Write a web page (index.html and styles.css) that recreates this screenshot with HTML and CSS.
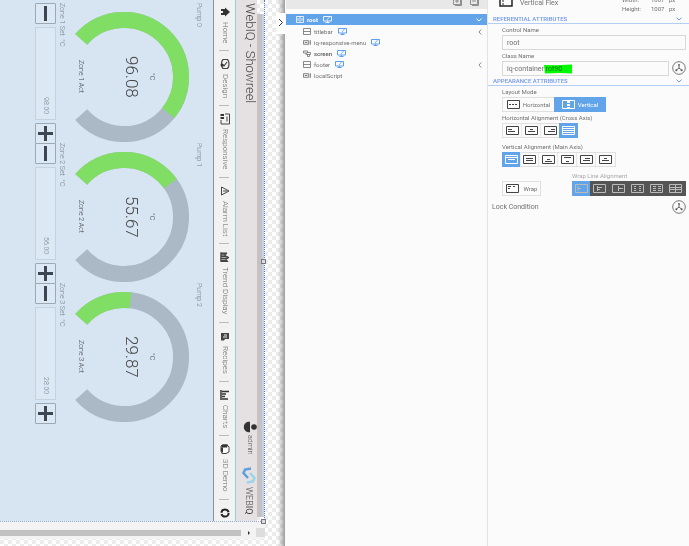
FILE: index.html
```html
<!DOCTYPE html>
<html lang="en">
<head>
    <meta charset="UTF-8">
    <meta name="viewport" content="width=device-width, initial-scale=1.0">
    <title>WebIQ Designer</title>
    <link rel="stylesheet" href="styles.css">
</head>
<body>
    <!-- shared icons -->
    <svg class="sprite" aria-hidden="true">
        <symbol id="i-monitor" viewBox="0 0 9 7"><path d="M.5.5h8v4.500h-8zM2.500 6.500h4" fill="none" stroke="currentColor" stroke-width=".9"/><path d="M4 4l2.500-3M4.500 5v1.500" stroke="currentColor" stroke-width=".7"/></symbol>
        <symbol id="i-rows" viewBox="0 0 8 7"><path d="M.5.5h7v6h-7zM.5 3.5h7" fill="none" stroke="currentColor" stroke-width=".8"/></symbol>
        <symbol id="i-script" viewBox="0 0 9 7"><path d="M.5 1.5h6v4h-6zM8.3 1v5M2 3.5h3" fill="none" stroke="currentColor"/></symbol>
        <symbol id="i-down" viewBox="0 0 6 4"><path d="M.5.7L3 3 5.500.7" fill="none" stroke="currentColor"/></symbol>
        <symbol id="i-left" viewBox="0 0 4 6"><path d="M3.200.5L1 3l2.200 2.500" fill="none" stroke="currentColor" stroke-width=".8"/></symbol>
        <symbol id="i-bind" viewBox="0 0 14 14"><circle cx="7" cy="7" r="6.300" fill="none" stroke="currentColor" stroke-width=".8"/><path d="M7 4v3L4.500 9M7 7l2.500 2" fill="none" stroke="currentColor" stroke-width=".9"/><circle cx="7" cy="3.800" r=".9" fill="currentColor"/><circle cx="4.300" cy="9.200" r="1" fill="currentColor"/><circle cx="9.700" cy="9.200" r="1" fill="currentColor"/></symbol>
    </svg>

    <main class="designer">
        <section class="canvas">
            <div class="viewport">
                <div class="app">
                    <header class="titlebar">
                        <h1>WebIQ - Showreel</h1>
                        <div class="user">
                            <svg width="14" height="12" viewBox="0 0 14 12"><circle cx="11" cy="6" r="2.800" fill="#333"/><path d="M7 .8v10.400H5C-.6 10-.6 2 5 .8z" fill="#333"/></svg>
                            admin
                        </div>
                        <div class="brand">
                            <svg width="16" height="19" viewBox="0 0 16 19"><path d="M10 2.500L4 3.500 2.500 7 7 12" fill="none" stroke="#5c9fdb" stroke-width="2.500"/><path d="M6 16.500l6-1 1.500-3.500L9 7" fill="none" stroke="#9bd3ea" stroke-width="2.500"/></svg>
                            <span>WEB<b>IQ</b></span>
                        </div>
                    </header>
                    <nav class="menu">
                        <a href="#"><svg viewBox="0 0 12 12"><path d="M11 6L6 1.500V3H2v2h2v2H2v2h4v1.500z" fill="#333"/></svg>Home</a>
                        <a href="#"><svg viewBox="0 0 12 12"><path d="M4 1.500h4.500c2 2 2 7 0 9H4c-2-2-2-7 0-9zM8 4L5 8 3.500 6" fill="none" stroke="#444" stroke-width="1.200"/><circle cx="3" cy="7" r="1.500" fill="#333"/></svg>Design</a>
                        <a href="#"><svg viewBox="0 0 12 12"><path d="M6 1h4.500v10H2V7M8 3.500v5" fill="none" stroke="#444"/><path d="M1.500 1h3.500v2H1.500zM1.500 4h3.500v2H1.500z" fill="#333"/></svg>Responsive</a>
                        <a href="#"><svg viewBox="0 0 12 12"><path d="M10 6L2.500 2v8z" fill="none" stroke="#444"/><path d="M4 6h4" stroke="#444"/></svg>Alarm List</a>
                        <a href="#"><svg viewBox="0 0 12 12"><path d="M2 1v10M2 2h6L6 4.500l4 2L7 8.500l2 2H2z" fill="#444" stroke="#444"/><path d="M2.500 4h3M2.500 6.500h5M2.500 8.500h4" stroke="#eee" stroke-width=".6"/></svg>Trend Display</a>
                        <a href="#"><svg viewBox="0 0 12 12"><path d="M2 3h8v6H6l-1 1.500H2z" fill="#444"/><path d="M5 5h3M4 7h4" stroke="#eee"/></svg>Recipes</a>
                        <a href="#"><svg viewBox="0 0 12 12"><path d="M2 1v10M3 2.500h7M3 5h4M3 7.500h3M3 10h6" fill="none" stroke="#333" stroke-width="1.500"/></svg>Charts</a>
                        <a href="#"><svg viewBox="0 0 12 12"><path d="M3 2h5l2 2v5l-3 1.500H3L2 8V3.500z" fill="#fff" stroke="#444"/><path d="M2 3l2-1.500h5L8 4.500H3z" fill="#333"/><path d="M2 4.500h2v5.500L2 8z" fill="#333"/></svg>3D Demo</a>
                        <a href="#"><svg viewBox="0 0 12 12"><circle cx="6" cy="6" r="3.600" fill="none" stroke="#222" stroke-width="2" stroke-dasharray="10 1.300"/></svg>D</a>
                    </nav>
                    <div class="pumps">
                        <section class="pump">
                            <h2>Pump 0</h2>
                            <div class="gauge">
                                <svg viewBox="0 0 130 130"><path class="track" d="M22.200 27.400A57 57 0 1 1 22.200 102.600"/><path class="fill" pathLength="150" stroke-dasharray="96.080 150" d="M22.200 27.400A57 57 0 1 1 22.200 102.600"/></svg>
                                <div class="reading"><span class="unit">°C</span><span class="value">96.08</span><span class="name">Zone 1 Act</span></div>
                            </div>
                            <label for="set1">Zone 1 Set &nbsp;°C</label>
                            <div class="stepper"><button type="button" aria-label="Decrease" class="minus"></button><input id="set1" value="98.00"><button type="button" aria-label="Increase" class="plus"></button></div>
                        </section>
                        <section class="pump">
                            <h2>Pump 1</h2>
                            <div class="gauge">
                                <svg viewBox="0 0 130 130"><path class="track" d="M22.200 27.400A57 57 0 1 1 22.200 102.600"/><path class="fill" pathLength="150" stroke-dasharray="55.670 150" d="M22.200 27.400A57 57 0 1 1 22.200 102.600"/></svg>
                                <div class="reading"><span class="unit">°C</span><span class="value">55.67</span><span class="name">Zone 2 Act</span></div>
                            </div>
                            <label for="set2">Zone 2 Set &nbsp;°C</label>
                            <div class="stepper"><button type="button" aria-label="Decrease" class="minus"></button><input id="set2" value="56.00"><button type="button" aria-label="Increase" class="plus"></button></div>
                        </section>
                        <section class="pump">
                            <h2>Pump 2</h2>
                            <div class="gauge">
                                <svg viewBox="0 0 130 130"><path class="track" d="M22.200 27.400A57 57 0 1 1 22.200 102.600"/><path class="fill" pathLength="150" stroke-dasharray="29.870 150" d="M22.200 27.400A57 57 0 1 1 22.200 102.600"/></svg>
                                <div class="reading"><span class="unit">°C</span><span class="value">29.87</span><span class="name">Zone 3 Act</span></div>
                            </div>
                            <label for="set3">Zone 3 Set &nbsp;°C</label>
                            <div class="stepper"><button type="button" aria-label="Decrease" class="minus"></button><input id="set3" value="28.00"><button type="button" aria-label="Increase" class="plus"></button></div>
                        </section>
                    </div>
                </div>
                <div class="scroll-y"></div>
                <div class="handle handle-mid"></div>
                <div class="handle handle-end"></div>
            </div>
            <div class="scroll-x"><div class="thumb"></div><svg width="4" height="6" viewBox="0 0 4 6"><path d="M1 1l2 2-2 2z" fill="#333"/></svg><div class="corner"></div></div>
        </section>

        <aside class="tree">
            <button type="button" class="collapse" aria-label="Collapse panel"><svg width="6" height="9" viewBox="0 0 6 9"><path d="M1 1l3.500 3.500L1 8" fill="none" stroke="#333"/></svg></button>
            <div class="tree-tools">
                <button type="button" aria-label="Expand all"><svg width="9" height="9" viewBox="0 0 9 9"><path d="M.5.5h7v7h-7zM2 4h4M4 2v4M8.500 2v6.500H2" fill="none" stroke="#777" stroke-width=".8"/></svg></button>
                <button type="button" aria-label="Collapse all"><svg width="9" height="9" viewBox="0 0 9 9"><path d="M.5.5h7v7h-7zM2 4h4M8.500 2v6.500H2" fill="none" stroke="#777" stroke-width=".8"/></svg></button>
            </div>
            <ul>
                <li class="node root"><svg width="8" height="7" viewBox="0 0 8 7"><path d="M.5.5h7v6h-7zM4 .5v6M2 2v3M6 2v3" fill="none" stroke="currentColor" stroke-width=".8"/></svg><b>root</b><svg class="link" width="9" height="7"><use href="#i-monitor"/></svg><svg class="arrow" width="6" height="4"><use href="#i-down"/></svg></li>
                <li class="node"><svg width="8" height="7"><use href="#i-rows"/></svg>titlebar<svg class="link" width="9" height="7"><use href="#i-monitor"/></svg><svg class="arrow" width="4" height="6"><use href="#i-left"/></svg></li>
                <li class="node"><svg width="8" height="7"><use href="#i-script"/></svg>iq-responsive-menu<svg class="link" width="9" height="7"><use href="#i-monitor"/></svg></li>
                <li class="node"><svg width="8" height="7" viewBox="0 0 8 7"><path d="M.5 1h4v2h-4zM3 3v1.500h4.500v-2H5M4.500 4.500v2h2v-2" fill="none" stroke="currentColor" stroke-width=".8"/></svg><b>screen</b><svg class="link" width="9" height="7"><use href="#i-monitor"/></svg></li>
                <li class="node"><svg width="8" height="7"><use href="#i-rows"/></svg>footer<svg class="link" width="9" height="7"><use href="#i-monitor"/></svg><svg class="arrow" width="4" height="6"><use href="#i-left"/></svg></li>
                <li class="node"><svg width="8" height="7"><use href="#i-script"/></svg>localScript</li>
            </ul>
        </aside>

        <aside class="props">
            <div class="summary">
                <svg width="14" height="14" viewBox="0 0 14 14"><path d="M1 1h12v12H1z" fill="none" stroke="#222" stroke-width="1.500"/><path d="M4 1v12" stroke="#222" stroke-dasharray="2 1"/></svg>
                <span class="kind">Vertical Flex</span>
                <dl>
                    <dt>Width:</dt><dd>1007</dd><dd>px</dd>
                    <dt>Height:</dt><dd>1007</dd><dd>px</dd>
                </dl>
            </div>
            <h3>REFERENTIAL ATTRIBUTES<svg width="6" height="4"><use href="#i-down"/></svg></h3>
            <div class="group">
                <label for="cname">Control Name</label>
                <input id="cname" value="root">
                <label for="clsname">Class Name</label>
                <div class="row">
                    <div class="field"><input id="clsname" value="iq-container rot90"><svg class="marker" width="28" height="10" viewBox="0 0 28 10"><path d="M0 1l12 .3L28 .5v9l-12-.5L1 9.500z" fill="#0f0"/></svg></div>
                    <button type="button" class="bind" aria-label="Bind class"><svg width="14" height="14"><use href="#i-bind"/></svg></button>
                </div>
            </div>
            <h3>APPEARANCE ATTRIBUTES<svg width="6" height="4"><use href="#i-down"/></svg></h3>
            <div class="group appearance">
                <p>Layout Mode</p>
                <div class="segments wide">
                    <button type="button"><svg viewBox="0 0 13 9"><path d="M.5.5h12v8H.5z"/><path d="M2 4.500h9" stroke-dasharray="2 1"/></svg>Horizontal</button>
                    <button type="button" class="on"><svg viewBox="0 0 13 9"><path d="M.5.5h12v8H.5z"/><path d="M6.500 1v7" stroke-width="3" stroke-dasharray="2 1"/></svg>Vertical</button>
                </div>
                <p>Horizontal Alignment (Cross Axis)</p>
                <div class="segments">
                    <button type="button" aria-label="Start"><svg viewBox="0 0 13 9"><path d="M.5.5h12v8H.5zM2 3.500h4M2 5.500h7"/></svg></button>
                    <button type="button" aria-label="Center"><svg viewBox="0 0 13 9"><path d="M.5.5h12v8H.5zM5 3.500h3M3 5.500h7"/></svg></button>
                    <button type="button" aria-label="End"><svg viewBox="0 0 13 9"><path d="M.5.5h12v8H.5zM7 3.500h4M4 5.500h7"/></svg></button>
                    <button type="button" class="on" aria-label="Stretch"><svg viewBox="0 0 13 9"><path d="M.5.5h12v8H.5zM1 2.500h11M1 4.500h11M1 6.500h11"/></svg></button>
                </div>
                <p class="spaced">Vertical Alignment (Main Axis)</p>
                <div class="segments">
                    <button type="button" class="on" aria-label="Start"><svg viewBox="0 0 13 9"><path d="M.5.5h12v8H.5zM1 2.500h11M3 4.500h7"/></svg></button>
                    <button type="button" aria-label="Center"><svg viewBox="0 0 13 9"><path d="M.5.5h12v8H.5zM3 3.500h7M3 5.500h7"/></svg></button>
                    <button type="button" aria-label="End"><svg viewBox="0 0 13 9"><path d="M.5.5h12v8H.5zM5 4.500h3M3 6.500h7"/></svg></button>
                    <button type="button" aria-label="Space between"><svg viewBox="0 0 13 9"><path d="M.5.5h12v8H.5zM3 2.500h7M5 6.500h3"/></svg></button>
                    <button type="button" aria-label="Space around"><svg viewBox="0 0 13 9"><path d="M.5.5h12v8H.5zM5 3.500h5M3 5.500h7"/></svg></button>
                    <button type="button" aria-label="Space evenly"><svg viewBox="0 0 13 9"><path d="M.5.5h12v8H.5zM5 3.500h3M3 5.500h7"/></svg></button>
                </div>
                <div class="row wrap-row">
                    <div class="segments">
                        <button type="button" class="wrap"><svg viewBox="0 0 13 9"><path d="M.5.5h12v8H.5zM2 2.500h3M7 2.500h2M2 4.500h2"/></svg>Wrap</button>
                    </div>
                    <div class="wrap-lines">
                        <p>Wrap Line Alignment</p>
                        <div class="segments disabled">
                            <button type="button" class="on" disabled aria-label="Start"><svg viewBox="0 0 13 9"><path d="M.5.5h12v8H.5zM3 2v5M3 4.500h3"/></svg></button>
                            <button type="button" disabled aria-label="Center"><svg viewBox="0 0 13 9"><path d="M.5.5h12v8H.5zM4.500 2v5M5 3.500h4M5 5.500h2"/></svg></button>
                            <button type="button" disabled aria-label="End"><svg viewBox="0 0 13 9"><path d="M.5.5h12v8H.5zM6.500 2v5M7 4.500h4"/></svg></button>
                            <button type="button" disabled aria-label="Space between"><svg viewBox="0 0 13 9"><path d="M.5.5h12v8H.5zM3 2.500h2M3 4.500h2M3 6.500h2M8 2.500h2M8 4.500h2M8 6.500h2"/></svg></button>
                            <button type="button" disabled aria-label="Space around"><svg viewBox="0 0 13 9"><path d="M.5.5h12v8H.5zM3 2.500h3M3 4.500h3M3 6.500h3M8 2.500h3M8 4.500h3M8 6.500h3"/></svg></button>
                            <button type="button" disabled aria-label="Stretch"><svg viewBox="0 0 13 9"><path d="M.5.5h12v8H.5zM1 3.500h11M1 5.500h11M6.500 1v7"/></svg></button>
                        </div>
                    </div>
                </div>
            </div>
            <div class="lock">Lock Condition<button type="button" class="bind" aria-label="Bind lock"><svg width="14" height="14"><use href="#i-bind"/></svg></button></div>
        </aside>
    </main>
</body>
</html>
```
FILE: styles.css
```css
* {
    margin: 0;
    padding: 0;
    box-sizing: border-box;
}

body {
    font-family: Roboto, sans-serif;
    font-size: 6px;
    line-height: 8px;
    color: #707070;
    background: #fbfbfb;
}

button,
input {
    font: inherit;
    color: inherit;
    border: 0;
    background: none;
}

.sprite {
    position: absolute;
    width: 0;
    height: 0;
}

.designer {
    display: grid;
    grid-template-columns: 1fr 203px 201px;
    height: 100vh;
}

/* canvas with the rotated preview */
.canvas {
    display: flex;
    flex-direction: column;
    min-width: 0;
    padding: 0 20px 7px 0;
    background: linear-gradient(to left, rgba(120,120,120,0.7), rgba(150,150,150,0) 7px), repeating-conic-gradient(#ececec 0 25%, #fff 0 50%) 0 0 / 8px 8px;
    overflow: hidden;
}

.viewport {
    position: relative;
    display: flex;
    flex: 1;
    min-height: 0;
    border-right: 1px dotted #5a7fc0;
    border-bottom: 1px dotted #8fa9d0;
}

.app {
    writing-mode: vertical-rl;
    display: flex;
    flex-direction: column;
    flex: 1;
    min-width: 0;
    overflow: hidden;
    font-weight: 300;
}

.scroll-y {
    width: 7px;
    margin: 14px 0 4px;
    background: #c6c2c2;
    border-right: 2px solid #c3d3ea;
}

.handle {
    position: absolute;
    right: -2px;
    width: 5px;
    height: 5px;
    border: 1px solid #778;
    background: #ddd;
}

.handle-mid {
    top: calc(50% - 2px);
}

.handle-end {
    bottom: -3px;
}

.scroll-x {
    display: flex;
    align-items: center;
    justify-content: space-between;
    height: 17px;
    padding-top: 4px;
    background: #f3f3f3;
}

.scroll-x .thumb {
    width: 91%;
    height: 6px;
    background: #c1c1c1;
}

.scroll-x .corner {
    width: 9px;
    height: 9px;
    background: #ddd;
}

.titlebar {
    display: flex;
    align-items: flex-start;
    width: 22px;
    padding: 3px 0 7px;
    background: #e5e1e3;
    border-left: 1px solid #8fd4d8;
    color: #444;
}

.titlebar h1 {
    flex: 1;
    font-size: 13px;
    line-height: 14px;
    font-weight: 300;
}

.user,
.brand {
    display: flex;
    align-items: center;
    font-size: 7px;
    gap: 2px;
}

.user {
    line-height: 14px;
}

.brand {
    margin-top: 11px;
    font-size: 9px;
    line-height: 14px;
}

.menu {
    display: flex;
    width: 22px;
    background: #f2f2f2;
    border-left: 1px solid #8c9298;
    overflow: hidden;
}

.menu a {
    display: flex;
    align-items: center;
    flex: none;
    gap: 4px;
    padding: 8px 0 7px;
    font-size: 8px;
    line-height: 10px;
    color: #666;
    text-decoration: none;
    white-space: nowrap;
    position: relative;
}

.menu a:first-child {
    padding-top: 6px;
}

.menu a + a::before {
    content: '';
    position: absolute;
    top: 0;
    left: 5px;
    width: 10px;
    height: 1px;
    background: #bbb;
}

.menu svg {
    width: 12px;
    height: 12px;
}

.pumps {
    display: flex;
    flex: 1;
    background: #d7e5f2;
    padding-right: 9px;
}

.pump {
    height: 140px;
    padding-top: 3px;
    font-size: 7px;
    line-height: 10px;
    color: #76808a;
}

.pump h2 {
    font-size: 7px;
    font-weight: 300;
}

.pump label {
    display: block;
}

.gauge {
    position: relative;
    width: 130px;
    height: 130px;
    margin: 9px 5px 0 -8px;
}

.gauge svg {
    width: 130px;
    height: 130px;
}

.gauge path {
    fill: none;
    stroke-width: 16px;
}

.gauge .track {
    stroke: #abb8c5;
}

.gauge .fill {
    stroke: #80de64;
}

/* text laid over the dial */
.reading {
    position: absolute;
    inset: 0;
    display: flex;
    flex-direction: column;
    align-items: center;
    padding: 0 32px 0 17px;
    justify-content: space-between;
    color: #444;
}

.reading .unit {
    margin-left: -30px;
}

.reading .value {
    font-size: 17px;
    line-height: 20px;
}

.stepper {
    display: flex;
    gap: 3px;
    width: 21px;
    height: 141px;
    margin-right: 1px;
}

.stepper input {
    flex: 1;
    min-height: 0;
    width: 21px;
    padding-bottom: 5px;
    text-align: end;
    border: 1px solid #c5d3e0;
    background: #dce9f5;
}

.stepper button {
    width: 21px;
    height: 21px;
    border: 1px solid #9ba8b5;
    border-radius: 1px;
    background: linear-gradient(#3b4650, #3b4650) center / 3px 15px no-repeat #dce8f3;
}

.stepper .plus {
    background: linear-gradient(#3b4650, #3b4650) center / 3px 15px no-repeat, linear-gradient(#3b4650, #3b4650) center / 15px 3px no-repeat #dce8f3;
}

/* control tree */
.tree {
    position: relative;
    padding-left: 1px;
    border-right: 1px solid #e3e3e3;
    background: #fbfbfb;
}

.collapse {
    position: absolute;
    top: 13px;
    left: -9px;
    width: 9px;
    height: 21px;
    background: #fff;
}

.tree-tools {
    display: flex;
    justify-content: flex-end;
    align-items: flex-end;
    gap: 8px;
    height: 9px;
    padding: 0 8px 1px 0;
    background: #e8e8e8;
    overflow: hidden;
}

.tree-tools button {
    height: 11px;
}

.tree ul {
    margin-top: 5px;
    list-style: none;
}

.node {
    display: flex;
    align-items: center;
    gap: 3px;
    height: 11px;
    padding: 0 5px 0 17px;
    line-height: 11px;
}

.node.root {
    margin-bottom: 1px;
    padding-left: 10px;
    color: #fff;
    background: #61a4ea;
}

.node .link {
    margin-left: 2px;
    color: #4c93ee;
}

.node.root .link {
    color: #fff;
}

.node .arrow {
    margin-left: auto;
}

/* properties */
.props {
    overflow: hidden;
}

.summary {
    display: flex;
    gap: 7px;
    height: 14px;
    margin-top: -5px;
    padding: 0 12px 0 11px;
    font-size: 7px;
}

.summary .kind {
    flex: 1;
    line-height: 16px;
}

.summary svg {
    margin-top: -2px;
}

.summary dl {
    display: grid;
    grid-template-columns: 29px 18px 8px;
    line-height: 9px;
    font-size: 6px;
}

.props h3 {
    display: flex;
    align-items: center;
    justify-content: space-between;
    height: 10px;
    padding: 0 7px 0 5px;
    border-bottom: 1px solid #b4cff5;
    font-size: 6px;
    font-weight: 500;
    color: #6f97ec;
}

.summary + h3 {
    margin-top: 5px;
}

.group {
    padding: 2px 3px 0 14px;
}

.group label {
    display: block;
    margin-bottom: 1px;
}

.group input {
    display: block;
    width: 100%;
    height: 15px;
    padding: 0 4px;
    font-size: 7px;
    border: 1px solid #d8d8d8;
}

.group > input {
    margin-bottom: 2px;
}

.row {
    display: flex;
    gap: 3px;
}

.field {
    position: relative;
    flex: 1;
}

.marker {
    position: absolute;
    left: 42px;
    top: 3px;
    mix-blend-mode: multiply;
}

.bind {
    width: 14px;
    height: 14px;
    color: #555;
}

.segments {
    display: flex;
    width: fit-content;
    height: 15px;
    margin: 1px 0 2px;
    border: 1px solid #e0e0e0;
}

.segments button {
    display: flex;
    align-items: center;
    justify-content: center;
    gap: 3px;
    width: 19px;
    border-right: 1px solid #e8e8e8;
}

.segments button:last-child {
    border-right: 0;
}

.segments.wide button {
    width: 52px;
}

.segments svg {
    width: 13px;
    height: 9px;
    fill: none;
    stroke: #444;
}

.segments .on {
    margin: -1px;
    color: #fff;
    background: #61a4ea;
}

.segments .on svg {
    stroke: #fff;
}

.segments .wrap {
    width: 37px;
    gap: 5px;
}

.spaced {
    margin-top: 5px;
}

.wrap-row {
    align-items: flex-end;
    justify-content: space-between;
    margin-top: 5px;
}

.wrap-lines {
    color: #aaa;
}

.segments.disabled {
    border-color: #555;
    background: #555;
}

.segments.disabled button {
    border-color: #555;
}

.segments.disabled svg {
    stroke: #bbb;
}

.lock {
    display: flex;
    align-items: center;
    justify-content: space-between;
    margin-top: 2px;
    padding: 0 3px 0 4px;
    font-size: 7px;
}
```
